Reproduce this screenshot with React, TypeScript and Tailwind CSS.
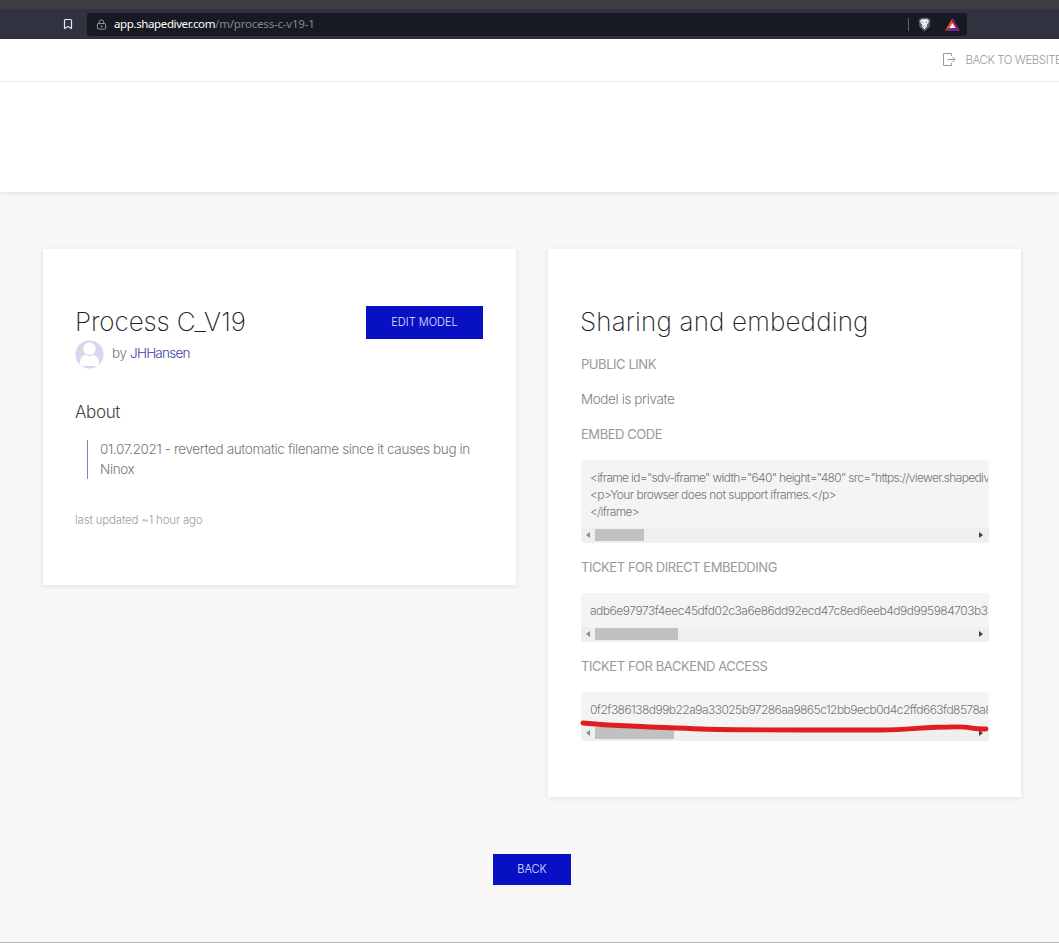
import type { ReactNode } from 'react'
import { Bookmark, LockKeyhole } from 'lucide-react'

interface SnippetProps {
  lines: { text: string; className: string }[]
  thumb: string
  children?: ReactNode
}

const EMBED_CODE = [
  {
    text: '<iframe id="sdv-iframe" width="640" height="480" src="https://viewer.shapediver.com"',
    className: 'tracking-[-0.67px]',
  },
  { text: '<p>Your browser does not support iframes.</p>', className: 'tracking-[-0.53px]' },
  { text: '</iframe>', className: 'tracking-[-0.7px]' },
]

const EMBED_TICKET = [
  {
    text: 'adb6e97973f4eec45dfd02c3a6e86dd92ecd47c8ed6eeb4d9d995984703b3',
    className: 'tracking-[-0.48px]',
  },
]

const BACKEND_TICKET = [
  {
    text: '0f2f386138d99b22a9a33025b97286aa9865c12bb9ecb0d4c2ffd663fd8578a8',
    className: 'tracking-[-0.54px]',
  },
]

function BrowserBar() {
  return (
    <div className="h-[39px] bg-[#303240] border-t-[9px] border-[#3c3c41] flex items-center">
      <Bookmark className="ml-[62px] w-3 h-3 text-gray-200 shrink-0" strokeWidth={2.4} />
      <div className="ml-[13px] w-[880px] h-[23px] bg-[#171a22] rounded-[3px] flex items-center">
        <LockKeyhole className="ml-[9px] w-[11px] h-[11px] text-gray-400 shrink-0" strokeWidth={2} />
        <div className="ml-[7px] text-[11.5px] leading-4 font-normal font-['Noto_Sans',sans-serif] text-[#85878c] whitespace-nowrap">
          <span className="text-white tracking-[-0.38px]">app.shapediver.com</span>
          <span className="tracking-[-0.2px]">/m/process-c-v19-1</span>
        </div>
        <div className="ml-auto flex items-center">
          <div className="w-px h-[13px] bg-[#62646b]" />
          <ShieldLogo />
          <TriangleLogo />
        </div>
      </div>
    </div>
  )
}

function ShieldLogo() {
  return (
    <svg className="ml-[9px] w-[13px] h-[15px]" viewBox="0 0 13 15">
      <path d="M3.5 .7h6l2.8 2.1-.7 7-5.1 4.7-5.1-4.7-.7-7z" fill="#5c5e68" />
      <path d="M4 2.2h5l1.8 1.4-.3 2.2-1.8 2 .4 1.800-2.600 2.700-2.600-2.700.4-1.800-1.800-2-.3-2.200z" fill="#f4f4f5" />
      <path d="M3.5 5l2 .7M9.5 5l-2 .7M5.2 9.5l1.3-.7 1.3.7" stroke="#5c5e68" strokeWidth=".7" fill="none" />
    </svg>
  )
}

function TriangleLogo() {
  return (
    <svg className="ml-[14px] mr-[7px] w-[15px] h-[13px]" viewBox="0 0 15 13">
      <path d="M7.5 0L0 13l7.5-4.3z" fill="#ff4724" />
      <path d="M7.5 0L15 13 7.5 8.7z" fill="#9e1f63" />
      <path d="M0 13h15L7.5 8.7z" fill="#662d91" />
      <path d="M7.5 4.9l3 5.2h-6z" fill="#fff" />
    </svg>
  )
}

function SectionLabel({ children }: { children: ReactNode }) {
  return (
    <h3 className="text-[13px] leading-5 font-normal tracking-[-0.44px] text-[#999] whitespace-nowrap">{children}</h3>
  )
}

function Snippet({ lines, thumb, children }: SnippetProps) {
  return (
    <div className="relative w-[408px] bg-[#f4f4f4] rounded-[3px] pt-[9px]">
      <div className="ml-[9px] mr-px overflow-hidden">
        {lines.map((line) => (
          <div key={line.text} className={`h-[17px] text-[12px] leading-[17px] text-[#747474] whitespace-nowrap ${line.className}`}>
            {line.text}
          </div>
        ))}
      </div>
      {/* Horizontal scrollbar */}
      <div className="mt-2 h-[15px] pb-[2px] bg-[#efefef] rounded-b-[3px] flex items-center">
        <svg className="ml-[5px] w-[4px] h-[6px]" viewBox="0 0 4 6">
          <path d="M4 0v6L0 3z" fill="#8c8c8c" />
        </svg>
        <div className={`ml-[5px] h-3 bg-[#c1c1c1] ${thumb}`} />
        <svg className="ml-auto mr-[6px] w-[4px] h-[6px]" viewBox="0 0 4 6">
          <path d="M0 0v6l4-3z" fill="#404040" />
        </svg>
      </div>
      {children}
    </div>
  )
}

function ModelCard() {
  return (
    <section className="w-[473px] h-[336px] bg-white shadow-[0_1px_6px_rgba(0,0,0,0.09)] pl-8 pr-[33px] pt-[57px]">
      <div className="flex justify-between items-start h-[33px]">
        <h1 className="text-[26px] leading-[32px] font-extralight tracking-[-0.08px] text-[#222] whitespace-nowrap">
          Process C_V19
        </h1>
        <button className="w-[117px] h-[33px] bg-[#0810c4] text-[11px] text-[#e4e6ff] whitespace-nowrap">
          EDIT MODEL
        </button>
      </div>
      <div className="flex items-center h-[29px] mt-px">
        <svg className="w-[29px] h-[29px]" viewBox="0 0 28 29">
          <circle cx="14" cy="14.5" r="14" fill="#d5d7ef" />
          <circle cx="14" cy="8.8" r="6.2" fill="#fff" />
          <path d="M4.5 23c0-5 3-8 5.5-8l4 1.2 4-1.2c2.5 0 5.5 3 5.5 8q0 3-2.5 3h-14q-2.5 0-2.5-3z" fill="#fff" />
        </svg>
        <div className="ml-2 pb-[3px] text-[13.5px] tracking-[-0.75px] text-[#777] whitespace-nowrap">
          <span className="tracking-[-0.4px]">by </span>
          <a className="text-[#4040a8]">JHHansen</a>
        </div>
      </div>
      <h2 className="mt-[33px] text-[17px] leading-5 tracking-[-0.35px] text-[#454545]">About</h2>
      <blockquote className="mt-[18px] ml-3 border-l border-[#8184bb] pl-3 text-[13.5px] leading-[19.5px] tracking-[-0.37px] text-[#777] whitespace-nowrap">
        01.07.2021 - reverted automatic filename since it causes bug in
        <br />
        Ninox
      </blockquote>
      <div className="mt-[33px] text-[11.5px] leading-4 tracking-[-0.18px] text-[#a0a0a0]">last updated ~1 hour ago</div>
    </section>
  )
}

function SharingCard() {
  return (
    <section className="w-[473px] h-[548px] bg-white shadow-[0_1px_6px_rgba(0,0,0,0.09)] pl-[32.6px] pt-[57px]">
      <h1 className="-ml-px text-[26px] leading-[32px] font-extralight tracking-[0.16px] text-[#222] whitespace-nowrap">
        Sharing and embedding
      </h1>
      <div className="mt-[16px]">
        <SectionLabel>PUBLIC LINK</SectionLabel>
      </div>
      <p className="mt-[15px] text-[13.5px] leading-5 tracking-[-0.4px] text-[#808080]">Model is private</p>
      <div className="mt-[15px] mb-4">
        <SectionLabel>EMBED CODE</SectionLabel>
      </div>
      <Snippet lines={EMBED_CODE} thumb="w-[49px]" />
      <div className="mt-[14px] mb-4">
        <SectionLabel>TICKET FOR DIRECT EMBEDDING</SectionLabel>
      </div>
      <Snippet lines={EMBED_TICKET} thumb="w-[83px]" />
      <div className="mt-[14px] mb-4">
        <SectionLabel>TICKET FOR BACKEND ACCESS</SectionLabel>
      </div>
      <Snippet lines={BACKEND_TICKET} thumb="w-[79px]">
        {/* Hand-drawn marker stroke over the scrollbar */}
        <svg className="absolute left-0 top-[26px] w-[408px] h-4 overflow-visible" viewBox="0 0 408 16">
          <path
            d="M2 5C30 8 75 9 120 11C150 12 180 12 220 12H300C325 12 345 9 368 9C394 8 384 11 405 11"
            fill="none"
            stroke="#e11d20"
            strokeWidth="4.8"
            strokeLinecap="round"
            strokeLinejoin="round"
          />
        </svg>
      </Snippet>
    </section>
  )
}

export default function App() {
  return (
    <div className="w-full h-[943px] overflow-hidden bg-[#f7f7f7] border-b border-[#b5b5b5] font-light font-['Inter','Liberation_Sans',sans-serif]">
      <BrowserBar />
      <header className="h-[153px] bg-white shadow-[0_1px_4px_rgba(0,0,0,0.1)]">
        <div className="h-[43px] border-b border-[#ebebeb] flex items-center">
          <svg className="ml-[943px] mb-px w-[13px] h-[13px] shrink-0" viewBox="0 0 13 13" fill="none" stroke="#999">
            <path d="M8.5 3V.5H.5v12h8V10M4.5 6.5h7.5M9.5 4L12 6.5 9.5 9" />
          </svg>
          <a className="ml-[9.5px] pt-px text-[11.5px] tracking-[-0.45px] text-[#999] whitespace-nowrap">BACK TO WEBSITE</a>
        </div>
      </header>
      <main className="pt-[57px]">
        <div className="ml-[43px] flex items-start gap-[32.4px] h-[605px]">
          <ModelCard />
          <SharingCard />
        </div>
        <button className="block ml-[493px] w-[78px] h-[31px] bg-[#0810c4] text-[11px] text-[#e4e6ff]">BACK</button>
      </main>
    </div>
  )
}
